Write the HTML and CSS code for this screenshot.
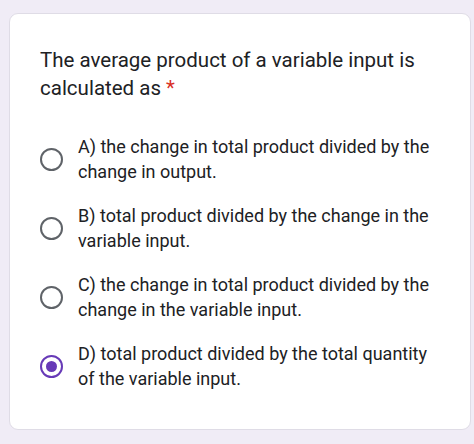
FILE: index.html
```html
<!DOCTYPE html>
<html lang="en">
<head>
    <meta charset="UTF-8">
    <meta name="viewport" content="width=device-width, initial-scale=1.0">
    <title>Question</title>
    <link rel="stylesheet" href="styles.css">
</head>
<body>
    <div class="card">
        <div class="question">The average product of a variable input is calculated as <span class="required">*</span></div>
        <div class="options">
            <label class="option">
                <span class="radio"></span>
                <span class="option-text">A) the change in total product divided by the change in output.</span>
            </label>
            <label class="option">
                <span class="radio"></span>
                <span class="option-text">B) total product divided by the change in the variable input.</span>
            </label>
            <label class="option">
                <span class="radio"></span>
                <span class="option-text">C) the change in total product divided by the change in the variable input.</span>
            </label>
            <label class="option">
                <span class="radio checked"></span>
                <span class="option-text">D) total product divided by the total quantity of the variable input.</span>
            </label>
        </div>
    </div>
</body>
</html>
```

FILE: styles.css
```css
body {
    margin: 0;
    background-color: #f0ecf6;
    font-family: Roboto, "Liberation Sans", sans-serif;
    color: #202124;
}
.card {
    margin: 13px 3px 0 9px;
    height: 417px;
    box-sizing: border-box;
    background-color: #fff;
    border: 1px solid #dfdce6;
    border-radius: 9px;
    padding: 32px 20px 0 30px;
}
.question {
    font-size: 20.5px;
    line-height: 28px;
    width: 400px;
}
.required {
    color: #d93025;
}
.options {
    margin-top: 32px;
    display: flex;
    flex-direction: column;
    gap: 19px;
}
.option {
    display: flex;
    align-items: center;
    gap: 15px;
}
.radio {
    flex: none;
    width: 19px;
    height: 19px;
    border: 2.5px solid #5f6368;
    border-radius: 50%;
    display: flex;
    align-items: center;
    justify-content: center;
}
.radio.checked {
    border-color: #673ab7;
}
.radio.checked::after {
    content: "";
    width: 11px;
    height: 11px;
    border-radius: 50%;
    background-color: #673ab7;
}
.option-text {
    font-size: 18px;
    line-height: 25px;
    width: 362px;
}
```
